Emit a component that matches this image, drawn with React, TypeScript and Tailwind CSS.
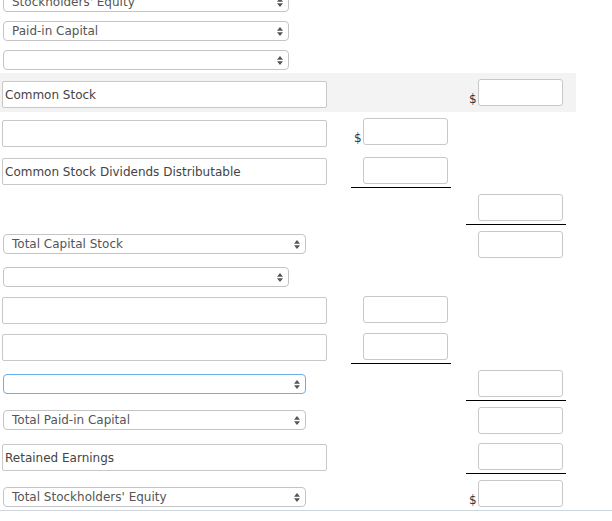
import React from "react";

const F = "font-['DejaVu_Sans',Verdana,sans-serif]";

function Arrows() {
  return (
    <svg width="6" height="9" viewBox="0 0 6 9" className="shrink-0">
      <polygon points="0,3.8 3,0 6,3.8" fill="#555" />
      <polygon points="0,5.2 6,5.2 3,9" fill="#555" />
    </svg>
  );
}

function Sel({ w, text, focused }: { w: string; text?: string; focused?: boolean }) {
  return (
    <div
      className={`${w} h-[20px] flex items-center justify-between rounded-[4px] border bg-white pl-[8px] pr-[5px] ${
        focused ? "border-[#6aaee8]" : "border-[#c4c4c4]"
      }`}
    >
      <span className={`${F} text-[12px] leading-none text-[#555] whitespace-nowrap`}>{text ?? ""}</span>
      <Arrows />
    </div>
  );
}

function LeftInput({ text }: { text?: string }) {
  return (
    <div className="w-[325px] h-[27px] flex items-center border border-[#c8c8c8] rounded-[2px] bg-white pl-[2px]">
      <span className={`${F} text-[12px] leading-none text-[#444] whitespace-nowrap`}>{text ?? ""}</span>
    </div>
  );
}

function Amount({ dollar, line }: { dollar?: boolean; line?: boolean }) {
  return (
    <div className="w-[100px]">
      <div className="flex items-end">
        <span className={`${F} w-[12px] pl-[3px] text-[12px] leading-none text-[#333] pb-[1px]`}>
          {dollar ? "$" : ""}
        </span>
        <div className="w-[85px] h-[27px] border border-[#c8c8c8] rounded-[3px] bg-white" />
      </div>
      {line ? <div className="mt-[3px] h-px bg-black" /> : null}
    </div>
  );
}

export default function App() {
  return (
    <div className="w-[612px] h-[521px] bg-white overflow-hidden">
      <div className="mt-[-8px]">
        {/* R0 */}
        <div className="flex h-[25px]">
          <div className="w-[351px] shrink-0 pl-[3px]">
            <Sel w="w-[286px]" text="Stockholders' Equity" />
          </div>
        </div>
        {/* R1 */}
        <div className="flex h-[29px]">
          <div className="w-[351px] shrink-0 pl-[3px] pt-[4px]">
            <Sel w="w-[286px]" text="Paid-in Capital" />
          </div>
        </div>
        {/* R2 */}
        <div className="flex h-[27px]">
          <div className="w-[351px] shrink-0 pl-[3px] pt-[4px]">
            <Sel w="w-[286px]" />
          </div>
        </div>
        {/* R3 */}
        <div className="flex h-[39px] w-[576px] bg-[#f3f3f3]">
          <div className="w-[351px] shrink-0 pl-[2px] pt-[8px]">
            <LeftInput text="Common Stock" />
          </div>
          <div className="w-[100px] shrink-0" />
          <div className="w-[15px] shrink-0" />
          <div className="w-[100px] shrink-0 pt-[6px]">
            <Amount dollar />
          </div>
        </div>
        {/* R4 */}
        <div className="flex h-[40px]">
          <div className="w-[351px] shrink-0 pl-[2px] pt-[8px]">
            <LeftInput />
          </div>
          <div className="w-[100px] shrink-0 pt-[6px]">
            <Amount dollar />
          </div>
        </div>
        {/* R5 */}
        <div className="flex h-[38px]">
          <div className="w-[351px] shrink-0 pl-[2px] pt-[6px]">
            <LeftInput text="Common Stock Dividends Distributable" />
          </div>
          <div className="w-[100px] shrink-0 pt-[5px]">
            <Amount line />
          </div>
        </div>
        {/* R6 */}
        <div className="flex h-[38px]">
          <div className="w-[351px] shrink-0" />
          <div className="w-[100px] shrink-0" />
          <div className="w-[15px] shrink-0" />
          <div className="w-[100px] shrink-0 pt-[4px]">
            <Amount line />
          </div>
        </div>
        {/* R7 */}
        <div className="flex h-[34px]">
          <div className="w-[351px] shrink-0 pl-[3px] pt-[6px]">
            <Sel w="w-[303px]" text="Total Capital Stock" />
          </div>
          <div className="w-[100px] shrink-0" />
          <div className="w-[15px] shrink-0" />
          <div className="w-[100px] shrink-0 pt-[3px]">
            <Amount />
          </div>
        </div>
        {/* R8 */}
        <div className="flex h-[30px]">
          <div className="w-[351px] shrink-0 pl-[3px] pt-[5px]">
            <Sel w="w-[286px]" />
          </div>
        </div>
        {/* R9 */}
        <div className="flex h-[37px]">
          <div className="w-[351px] shrink-0 pl-[2px] pt-[5px]">
            <LeftInput />
          </div>
          <div className="w-[100px] shrink-0 pt-[4px]">
            <Amount />
          </div>
        </div>
        {/* R10 */}
        <div className="flex h-[38px]">
          <div className="w-[351px] shrink-0 pl-[2px] pt-[5px]">
            <LeftInput />
          </div>
          <div className="w-[100px] shrink-0 pt-[4px]">
            <Amount line />
          </div>
        </div>
        {/* R11 */}
        <div className="flex h-[37px]">
          <div className="w-[351px] shrink-0 pl-[3px] pt-[7px]">
            <Sel w="w-[303px]" focused />
          </div>
          <div className="w-[100px] shrink-0" />
          <div className="w-[15px] shrink-0" />
          <div className="w-[100px] shrink-0 pt-[3px]">
            <Amount line />
          </div>
        </div>
        {/* R12 */}
        <div className="flex h-[34px]">
          <div className="w-[351px] shrink-0 pl-[3px] pt-[6px]">
            <Sel w="w-[303px]" text="Total Paid-in Capital" />
          </div>
          <div className="w-[100px] shrink-0" />
          <div className="w-[15px] shrink-0" />
          <div className="w-[100px] shrink-0 pt-[3px]">
            <Amount />
          </div>
        </div>
        {/* R13 */}
        <div className="flex h-[39px]">
          <div className="w-[351px] shrink-0 pl-[2px] pt-[6px]">
            <LeftInput text="Retained Earnings" />
          </div>
          <div className="w-[100px] shrink-0" />
          <div className="w-[15px] shrink-0" />
          <div className="w-[100px] shrink-0 pt-[5px]">
            <Amount line />
          </div>
        </div>
        {/* R14 */}
        <div className="flex h-[34px] border-b border-[#cfd5dd]">
          <div className="w-[351px] shrink-0 pl-[3px] pt-[10px]">
            <Sel w="w-[303px]" text="Total Stockholders' Equity" />
          </div>
          <div className="w-[100px] shrink-0" />
          <div className="w-[15px] shrink-0" />
          <div className="w-[100px] shrink-0 pt-[3px]">
            <Amount dollar />
          </div>
        </div>
      </div>
    </div>
  );
}
